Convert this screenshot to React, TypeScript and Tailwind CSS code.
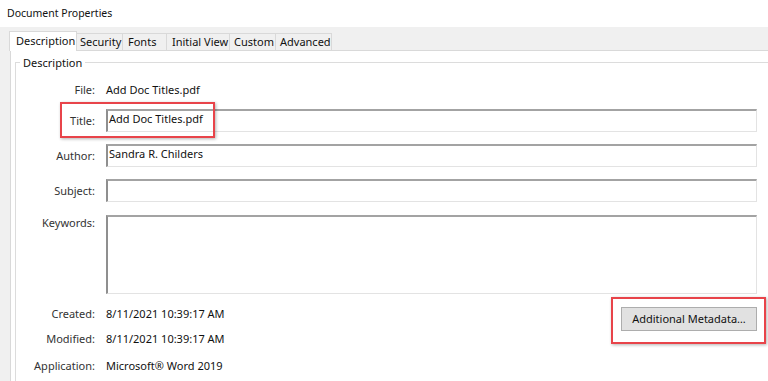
import React from "react";

const inputCls =
  "bg-white border-t-[2px] border-l-[2px] border-r border-b border-t-[#a3a3a3] border-l-[#8f8f8f] border-r-[#e3e3e3] border-b-[#e3e3e3] w-[651px] pl-[1px] leading-[16px]";

function Label({ children }: { children: React.ReactNode }) {
  return <div className="w-[79px] shrink-0 text-right text-[#333] leading-[16px] whitespace-nowrap">{children}</div>;
}

const tabCls = "h-[17px] border-t border-r border-[#d9d9d9] leading-[16px] whitespace-nowrap overflow-hidden";

export default function App() {
  return (
    <div className="relative w-[768px] h-[381px] overflow-hidden bg-white font-['Noto_Sans',sans-serif] text-[11px] text-[#111]">
      <div className="h-[27px] flex items-center pl-[7px] text-[10.5px] text-[#111]">Document Properties</div>
      <div className="h-[354px] flex flex-col bg-[#f0f0f0]">
        <div className="h-[23px] flex items-end pl-[9px] shrink-0">
          <div className="relative z-10 -mb-px w-[68px] h-[20px] bg-white border border-b-0 border-[#d9d9d9] pl-[6px] pt-[1px] leading-[16px] whitespace-nowrap">
            Description
          </div>
          <div className={"w-[46px] pl-[3px] " + tabCls}>Security</div>
          <div className={"w-[44px] pl-[5px] " + tabCls}>Fonts</div>
          <div className={"w-[63px] pl-[5px] " + tabCls}>Initial View</div>
          <div className={"w-[46px] pl-[4px] " + tabCls}>Custom</div>
          <div className={"w-[56px] pl-[4px] " + tabCls}>Advanced</div>
        </div>
        <div className="flex-1 ml-[10px] bg-white border-l border-t border-[#d9d9d9] pt-[11px] pl-[4px]">
          <div className="relative w-[800px] h-[400px] border border-[#dcdcdc]">
            <div className="absolute left-[4px] -top-[8px] px-[3px] bg-white leading-[16px]">Description</div>
            <div className="flex flex-col pt-[19px]">
              <div className="flex h-[16px]">
                <Label>File:</Label>
                <div className="ml-[11px] leading-[16px]">Add Doc Titles.pdf</div>
              </div>
              <div className="flex items-center mt-[11px]">
                <Label>Title:</Label>
                <div className={"ml-[11px] h-[23px] " + inputCls}>Add Doc Titles.pdf</div>
              </div>
              <div className="flex items-center mt-[12px]">
                <Label>Author:</Label>
                <div className={"ml-[11px] h-[23px] " + inputCls}>Sandra R. Childers</div>
              </div>
              <div className="flex items-center mt-[12px]">
                <Label>Subject:</Label>
                <div className={"ml-[11px] h-[23px] " + inputCls}></div>
              </div>
              <div className="flex items-start mt-[13px]">
                <Label>Keywords:</Label>
                <div className={"ml-[11px] h-[79px] " + inputCls}></div>
              </div>
              <div className="flex items-start mt-[12px] h-[25px]">
                <Label>Created:</Label>
                <div className="ml-[11px] leading-[16px]">8/11/2021 10:39:17 AM</div>
                <div className="ml-auto mr-[57px] mt-[1px] w-[136px] h-[24px] bg-[#e1e1e1] border border-[#adadad] flex items-center justify-center text-[#111] whitespace-nowrap">
                  Additional Metadata…
                </div>
              </div>
              <div className="flex h-[16px]">
                <Label>Modified:</Label>
                <div className="ml-[11px] leading-[16px]">8/11/2021 10:39:17 AM</div>
              </div>
              <div className="flex h-[16px] mt-[11px]">
                <Label>Application:</Label>
                <div className="ml-[11px] leading-[16px]">Microsoft® Word 2019</div>
              </div>
            </div>
          </div>
        </div>
      </div>
      <div className="absolute left-[60px] top-[102px] w-[155px] h-[36px] border-2 border-[#e8444a] shadow-[1px_1px_3px_rgba(0,0,0,0.3)]"></div>
      <div className="absolute left-[611px] top-[297px] w-[155px] h-[47px] border-2 border-[#e8444a] shadow-[1px_1px_3px_rgba(0,0,0,0.3)]"></div>
    </div>
  );
}
